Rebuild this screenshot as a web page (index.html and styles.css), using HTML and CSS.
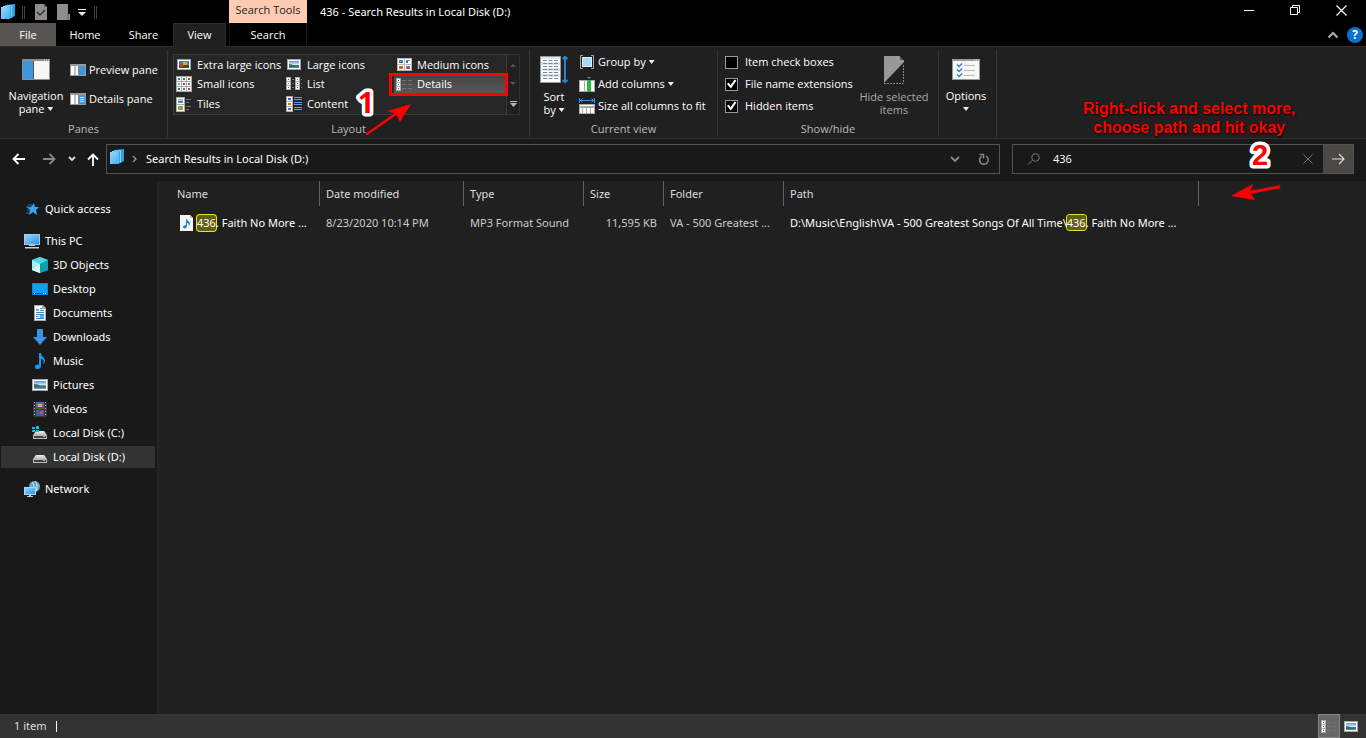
FILE: index.html
```html
<!DOCTYPE html>
<html lang="en">
<head>
<meta charset="utf-8">
<title>436 - Search Results in Local Disk (D:)</title>
<link rel="stylesheet" href="styles.css">
</head>
<body>
<svg class="sprite" aria-hidden="true">
  <defs>
    <linearGradient id="gFolder" x1="0" y1="0" x2="1" y2="1"><stop offset="0" stop-color="#9bdcff"/><stop offset="1" stop-color="#44aef5"/></linearGradient>
    <linearGradient id="gScreen" x1="0" y1="0" x2="1" y2="1"><stop offset="0" stop-color="#8fd3ff"/><stop offset="1" stop-color="#2a97ea"/></linearGradient>
    <linearGradient id="gSky" x1="0" y1="0" x2="0" y2="1"><stop offset="0" stop-color="#5b9bdc"/><stop offset=".5" stop-color="#d3e9f5"/><stop offset=".6" stop-color="#3f6f75"/><stop offset="1" stop-color="#78a9d0"/></linearGradient>
    <linearGradient id="gDisk" x1="0" y1="0" x2="0" y2="1"><stop offset="0" stop-color="#f2f2f2"/><stop offset="1" stop-color="#b5b5b5"/></linearGradient>
  </defs>
  <symbol id="results" viewBox="0 0 16 16"><path d="M5 1l10-1v12l-2 1V2L5 3z" fill="#2f9de8"/><path d="M3 2l10-1v12l-2 1H3z" fill="#7fd0ff"/><path d="M1 3l9-1v13H1z" fill="url(#gFolder)"/><path d="M10.500 2v12.500M12.500 1v12" stroke="#258bd6" stroke-width=".7"/></symbol>
  <symbol id="thumb" viewBox="0 0 14 11"><path d="M0 0h14v11H0z" fill="#a4a4a4"/><path d="M1 1h12v9H1z" fill="#fff"/><path d="M2 2h10v7H2z" fill="url(#gSky)"/><path d="M2 5l3 .5 2 1.500 5 .5v1H2z" fill="#3a6d74"/></symbol>
  <symbol id="thumbxl" viewBox="0 0 14 11"><path d="M0 0h14v11H0z" fill="#a4a4a4"/><path d="M1 1h12v9H1z" fill="#fff"/><path d="M2 2h10v7H2z" fill="#3878d8"/><path d="M2 6h10v3H2z" fill="#235c35"/><circle cx="8" cy="4.500" r="2.200" fill="#e8a81e"/><path d="M3 5h3v3H3z" fill="#d63b2b"/><path d="M7 6h3v2H7z" fill="#684014"/></symbol>
  <symbol id="medium" viewBox="0 0 15 13"><path d="M0 0h15v13H0z" fill="#b8b8b8"/><path d="M1 1h6v5H1zM8 1h6v5H8zM1 7h6v5H1zM8 7h6v5H8z" fill="#fff"/><path d="M2 2h4v2H2z" fill="#4d91cf"/><path d="M2 4h4v1H2z" fill="#3f705c"/><path d="M9 2h4v1H9z" fill="#52a6a0"/><path d="M9 3h2v2H9z" fill="#336a9b"/><path d="M2 8h4v3H2z" fill="#bd7b2c"/><path d="M3 8h2v2H3z" fill="#df523b"/><path d="M9 8h4v3H9z" fill="#7584c6"/><path d="M10 9h3v2h-3z" fill="#d33c3c"/></symbol>
  <symbol id="small" viewBox="0 0 16 16"><path d="M0 0h16v16H0z" fill="#aaa"/><path d="M1 1h4v4H1zM6 1h4v4H6zM11 1h4v4h-4zM1 6h4v4H1zM6 6h4v4H6zM11 6h4v4h-4zM1 11h4v4H1zM6 11h4v4H6zM11 11h4v4h-4z" fill="#fff"/><path d="M2 2h2v2H2zM12 7h2v2h-2zM7 12h2v2H7z" fill="#367bb7"/><path d="M7 2h2v2H7zM2 12h2v2H2z" fill="#2f7a64"/><path d="M12 2h2v2h-2zM7 7h2v2H7zM12 12h2v2h-2z" fill="#c23e30"/><path d="M2 7h2v2H2z" fill="#4aa6cc"/></symbol>
  <symbol id="list" viewBox="0 0 16 14"><path d="M0 0h5v13H0zM9 0h5v13H9z" fill="#aaa"/><path d="M1 1h3v3H1zM1 5h3v3H1zM1 9h3v3H1zM10 1h3v3h-3zM10 5h3v3h-3zM10 9h3v3h-3z" fill="#fff"/><path d="M2 2h1v1H2zM11 6h1v1h-1z" fill="#345"/><path d="M2 6h1v1H2zM11 2h1v1h-1z" fill="#267bd0"/><path d="M2 10h1v1H2zM11 10h1v1h-1z" fill="#d02222"/><path d="M6 2h2v1H6zM6 6h2v1H6zM6 10h2v1H6zM15 2h1v1h-1zM15 6h1v1h-1zM15 10h1v1h-1z" fill="#777"/></symbol>
  <symbol id="details" viewBox="0 0 16 13"><path d="M0 0h5v13H0z" fill="#aaa"/><path d="M1 1h3v3H1zM1 5h3v3H1zM1 9h3v3H1z" fill="#fff"/><path d="M2 2h1v1H2z" fill="#345"/><path d="M2 6h1v1H2z" fill="#267bd0"/><path d="M2 10h1v1H2z" fill="#d02222"/><path d="M6 2h4v1H6zM6 6h4v1H6zM6 10h4v1H6zM12 2h4v1h-4zM12 6h4v1h-4zM12 10h4v1h-4z" fill="#747474"/></symbol>
  <symbol id="tiles" viewBox="0 0 16 15"><path d="M0 0h9v15H0z" fill="#aaa"/><path d="M1 1h7v6H1zM1 8h7v6H1z" fill="#fff"/><path d="M2 2h5v4H2z" fill="url(#gSky)"/><path d="M2 9h5v4H2z" fill="#73a954"/><path d="M3 10h2v2H3zM6 11h1v2H6z" fill="#e28b2b"/><path d="M10 2h5v1h-5zM10 5h3v1h-3zM10 9h5v1h-5zM10 12h3v1h-3z" fill="#777"/></symbol>
  <symbol id="content" viewBox="0 0 16 16"><path d="M0 0h7v16H0z" fill="#aaa"/><path d="M1 1h5v4H1zM1 6h5v4H1zM1 11h5v4H1z" fill="#fff"/><path d="M2 2h3v2H2z" fill="#31729e"/><path d="M2 7h3v2H2z" fill="#bd8042"/><path d="M2 12h3v2H2z" fill="#327dc1"/><path d="M8 1h8v1H8zM8 6h8v1H8zM8 11h8v1H8z" fill="#6b9be8"/><path d="M8 3h8v1H8zM8 8h8v1H8zM8 13h8v1H8z" fill="#6b9be8"/></symbol>
  <symbol id="disk" viewBox="0 0 16 16"><path d="M4 6h8l3 4H1z" fill="url(#gDisk)"/><path d="M1 10h14v4H1z" fill="#b9b9b9"/><path d="M2 11h12v2H2z" fill="#444"/><path d="M11 11h2v1h-2z" fill="#35e248"/></symbol>
</svg>

<header class="titlebar">
  <div class="quick">
    <svg width="16" height="16"><use href="#results"/></svg>
    <span class="rail"></span>
    <button class="plain" aria-label="Properties"><svg width="12" height="16"><path d="M0 0h9l3 3v13H0z" fill="#8d8d8d"/><path d="M9 0v3h3" fill="#555"/><path d="M2 8l3 3 5-5" fill="none" stroke="#333" stroke-width="1.500"/></svg></button>
    <button class="plain" aria-label="New folder"><svg width="13" height="16"><path d="M0 0h11v10h2v6H0z" fill="#8d8d8d"/><path d="M11 10v6" stroke="#666"/></svg></button>
    <button class="plain last" aria-label="Customize toolbar"><svg width="8" height="7"><path d="M0 0h8v1H0zM0 3h8L4 7z" fill="#eee"/></svg></button>
    <span class="rail"></span>
  </div>
  <div class="tools">Search Tools</div>
  <h1 class="caption">436 - Search Results in Local Disk (D:)</h1>
  <div class="window">
    <button aria-label="Minimize"><svg width="10" height="11"><path d="M0 5h10v1H0z" fill="#fff"/></svg></button>
    <button aria-label="Restore"><svg width="11" height="11" fill="none" stroke="#fff"><path d="M.5 2.500h7v7h-7zM2.500 2.500v-2h7v7h-2"/></svg></button>
    <button aria-label="Close"><svg width="11" height="11"><path d="M.5.5l10 10M10.500.5l-10 10" stroke="#fff" stroke-width="1.200"/></svg></button>
  </div>
</header>

<nav class="tabs">
  <button class="tab file">File</button>
  <button class="tab home">Home</button>
  <button class="tab share">Share</button>
  <button class="tab view">View</button>
  <button class="tab search">Search</button>
  <div class="help">
    <button class="plain" aria-label="Collapse ribbon"><svg width="12" height="8"><path d="M1.500 6.500L6 2l4.500 4.500" fill="none" stroke="#aaa" stroke-width="2.200"/></svg></button>
    <button class="plain round" aria-label="Help">?</button>
  </div>
</nav>

<section class="ribbon">
  <div class="group panes">
    <div class="body">
      <button class="big nav">
        <svg width="28" height="21"><path d="M0 0h28v21H0z" fill="#8d8d8d"/><path d="M1 2h26v18H1z" fill="#f7f7f7"/><path d="M1 2h10v18H1z" fill="#3d96e0"/><path d="M11 2h1v18h-1z" fill="#555"/><path d="M22 1h1M24 1h1M26 1h1" stroke="#ddd"/></svg>
        <span>Navigation<br>pane <i class="caret"></i></span>
      </button>
      <div class="stack pair">
        <button class="item"><svg width="16" height="12"><path d="M0 0h16v12H0z" fill="#999"/><path d="M1 2h14v9H1z" fill="#fff"/><path d="M9 2h6v9H9z" fill="#3d96e0"/><path d="M5 2v9M8.500 2v9" stroke="#888"/></svg>Preview pane</button>
        <button class="item"><svg width="16" height="12"><path d="M0 0h16v12H0z" fill="#999"/><path d="M1 2h14v9H1z" fill="#fff"/><path d="M9 2h6v9H9z" fill="#3d96e0"/><path d="M5 2v9M8.500 2v9" stroke="#888"/><path d="M10 4.500h4M10 6.500h4M10 8.500h4" stroke="#c9e5fc"/></svg>Details pane</button>
      </div>
    </div>
    <div class="label">Panes</div>
  </div>

  <div class="group layout">
    <div class="body">
      <div class="gallery">
        <button class="choice"><svg width="14" height="11"><use href="#thumbxl"/></svg>Extra large icons</button>
        <button class="choice"><svg width="14" height="11"><use href="#thumb"/></svg>Large icons</button>
        <button class="choice"><svg width="15" height="13"><use href="#medium"/></svg>Medium icons</button>
        <button class="choice"><svg width="16" height="16"><use href="#small"/></svg>Small icons</button>
        <button class="choice"><svg width="16" height="14"><use href="#list"/></svg>List</button>
        <button class="choice chosen"><svg width="16" height="13"><use href="#details"/></svg>Details</button>
        <button class="choice"><svg width="16" height="15"><use href="#tiles"/></svg>Tiles</button>
        <button class="choice"><svg width="16" height="16"><use href="#content"/></svg>Content</button>
      </div>
      <div class="spin">
        <button class="plain" aria-label="Scroll up"><svg width="6" height="4"><path d="M0 4l3-3 3 3z" fill="#555"/></svg></button>
        <button class="plain" aria-label="Scroll down"><svg width="6" height="4"><path d="M0 0l3 3 3-3z" fill="#555"/></svg></button>
        <button class="plain" aria-label="More layouts"><svg width="7" height="6"><path d="M0 0h7v1H0zM0 2h7L3.500 6z" fill="#bbb"/></svg></button>
      </div>
    </div>
    <div class="label">Layout</div>
  </div>

  <div class="group current">
    <div class="body">
      <button class="big sort">
        <svg width="28" height="28"><path d="M0 0h21v27H0z" fill="#999"/><path d="M1 1h19v25H1z" fill="#fff"/><path d="M1 1h19v2H1zM1 6h19v3H1zM1 12h19v3H1zM1 18h19v3H1z" fill="#d2e8f6"/><path d="M3 4.500h15M3 7.500h15M3 10.500h15M3 13.500h15M3 16.500h15M3 19.500h15M3 22.500h15" stroke="#888" stroke-dasharray="4 1.500"/><path d="M25 2v23M22.500 3L25 .8 27.500 3M22.500 24l2.500 2.200 2.500-2.200" fill="none" stroke="#2d83cd" stroke-width="2"/></svg>
        <span>Sort<br>by <i class="caret"></i></span>
      </button>
      <div class="stack">
        <button class="item"><svg width="16" height="14"><path d="M4 .5H1.500v13H4M12 .5h2.500v13H12" fill="none" stroke="#aaa"/><path d="M3 2h10v10H3z" fill="#d9effc"/><path d="M4 3h8v8H4z" fill="#a8d7fa"/></svg>Group by <i class="caret"></i></button>
        <button class="item"><svg width="16" height="15"><path d="M0 3h16v12H0z" fill="#aaa"/><path d="M1 4h4v10H1zM6 4h4v10H6zM12 4h3v10h-3z" fill="#fff"/><path d="M8 3h4v12H8z" fill="#2eb642"/><path d="M8 0h4l-2 2z" fill="#3293df"/></svg>Add columns <i class="caret"></i></button>
        <button class="item"><svg width="16" height="16"><path d="M.5 0v5M15.500 0v5M1 2.500h14M3.500.5l-2 2 2 2M12.500.5l2 2-2 2" fill="none" stroke="#3293df"/><path d="M0 6h16v10H0z" fill="#aaa"/><path d="M1 10h2v5H1zM4 10h3v5H4zM8 10h3v5H8zM12 10h3v5h-3zM1 7h14v1H1z" fill="#fff"/></svg>Size all columns to fit</button>
      </div>
    </div>
    <div class="label">Current view</div>
  </div>

  <div class="group show">
    <div class="body">
      <div class="stack">
        <label class="item"><input type="checkbox">Item check boxes</label>
        <label class="item"><input type="checkbox" checked>File name extensions</label>
        <label class="item"><input type="checkbox" checked>Hidden items</label>
      </div>
      <button class="big hide" disabled>
        <svg width="22" height="28"><path d="M1 0h15l5 5v1L1 27z" fill="#989898"/><path d="M16 0v5h5z" fill="#555"/><path d="M16 0v5h5" fill="none" stroke="#bbb"/><path d="M20.500 9v18.500H1" fill="none" stroke="#888" stroke-dasharray="2 1"/></svg>
        <span>Hide selected<br>items</span>
      </button>
    </div>
    <div class="label">Show/hide</div>
  </div>

  <div class="group options">
    <div class="body">
      <button class="big">
        <svg width="28" height="21"><path d="M0 0h28v21H0z" fill="#999"/><path d="M1 2h26v18H1z" fill="#f7f7f7"/><path d="M12 6.500h11M12 11.500h11M12 16.500h11" stroke="#bbb"/><path d="M5 5.500l2 2 3-3M5 10.500l2 2 3-3M5 15.500l2 2 3-3" fill="none" stroke="#3283ca" stroke-width="1.500"/><path d="M22 1h1M24 1h1M26 1h1" stroke="#ddd"/></svg>
        <span>Options<br><i class="caret"></i></span>
      </button>
    </div>
  </div>
</section>

<section class="location">
  <div class="history">
    <button class="plain" aria-label="Back"><svg width="13" height="12"><path d="M13 6H1.500M6.500 1l-5 5 5 5" fill="none" stroke="#fff" stroke-width="1.800"/></svg></button>
    <button class="plain" aria-label="Forward"><svg width="13" height="12"><path d="M0 6h11.500M6.500 1l5 5-5 5" fill="none" stroke="#888" stroke-width="1.800"/></svg></button>
    <button class="plain" aria-label="Recent"><svg width="8" height="6"><path d="M1 1l3 3 3-3" fill="none" stroke="#ddd" stroke-width="1.800"/></svg></button>
    <button class="plain" aria-label="Up"><svg width="12" height="13"><path d="M6 13V1.500M1 6.500l5-5 5 5" fill="none" stroke="#fff" stroke-width="1.800"/></svg></button>
  </div>
  <div class="address">
    <svg width="16" height="16"><use href="#results"/></svg>
    <svg width="5" height="8"><path d="M1 1l3 3-3 3" fill="none" stroke="#999" stroke-width="1.300"/></svg>
    <span class="path">Search Results in Local Disk (D:)</span>
    <button class="plain drop" aria-label="Previous locations"><svg width="10" height="7"><path d="M1 1l4 4 4-4" fill="none" stroke="#8a8a8a" stroke-width="1.800"/></svg></button>
    <button class="plain refresh" aria-label="Refresh"><svg width="12" height="13"><path d="M8 3.200A4.300 4.300 0 1 1 3.500 3.400M1.500 1.500h4v4" fill="none" stroke="#888" stroke-width="1.500"/></svg></button>
  </div>
  <form class="find">
    <svg width="14" height="12"><circle cx="8.500" cy="4.500" r="3.800" fill="none" stroke="#777"/><path d="M5.500 7.200L1 11.500" stroke="#777"/></svg>
    <input type="text" value="436" aria-label="Search">
    <button type="button" class="plain" aria-label="Clear"><svg width="10" height="10"><path d="M.5.5l9 9M9.500.5l-9 9" stroke="#777"/></svg></button>
    <button type="button" class="go" aria-label="Go"><svg width="13" height="12"><path d="M0 6h12M7 1l5 5-5 5" fill="none" stroke="#ddd" stroke-width="1.200"/></svg></button>
  </form>
</section>

<main class="main">
  <nav class="tree">
    <a href="#" class="root"><svg width="16" height="16"><path d="M10 2l1 4h4l-3 3 1 5-4-3-4 3 1-5-3-3h4z" fill="#36a5f4"/><path d="M4 4h4M2 6h4M3 9h3M2 12h4" stroke="#2174b4"/></svg>Quick access</a>
    <a href="#" class="root gap"><svg width="16" height="16"><path d="M0 1h16v11H0z" fill="#a9c7d9"/><path d="M1 2h14v9H1z" fill="url(#gScreen)"/><path d="M5 12h6v1H5zM1 14h14v1.500H1z" fill="#c9d1d6"/></svg>This PC</a>
    <a href="#"><svg width="16" height="16"><path d="M8 0l8 3v10l-8 3-8-3V3z" fill="#25bccb"/><path d="M8 0l8 3-8 4-8-4z" fill="#51d5df"/><path d="M0 3l8 4v9l-8-3z" fill="#a5eef0"/><path d="M8 7l8-4v10l-8 3z" fill="#0e9fb7"/><path d="M0 13l8-6v9z" fill="#d3fbf7"/></svg>3D Objects</a>
    <a href="#"><svg width="16" height="16"><path d="M0 2h16v12H0z" fill="#1484d8"/><path d="M1 3h14v9H1z" fill="#159cf5"/><path d="M1 12h14v1H1z" fill="#0756a0"/><path d="M2 12h1v1H2zM11 12h1v1h-1zM13 12h1v1h-1z" fill="#fff"/></svg>Desktop</a>
    <a href="#"><svg width="16" height="16"><path d="M2 0h9l3 3v13H2z" fill="#aaa"/><path d="M3 1h7v3h3v11H3z" fill="#fff"/><path d="M4 7.500h8M8 3.500h2M8 5.500h4M4 9.500h8M4 13.500h8" stroke="#3386bf"/><path d="M4 4h3v2H4zM8 10h4v3H8z" fill="#6da9cf"/><path d="M4 11.500h3" stroke="#888"/></svg>Documents</a>
    <a href="#"><svg width="16" height="16"><path d="M5 0h6v8h4l-7 8-7-8h4z" fill="#3b94e5"/></svg>Downloads</a>
    <a href="#"><svg width="16" height="16"><path d="M7 0h2c0 4 4 4 4 8 0 1-1 3-2 3 2-4-1-5-2-5v7c0 4-6 4-6 1 0-2 2-3 4-2z" fill="#139cf2"/></svg>Music</a>
    <a href="#"><svg width="16" height="12"><path d="M0 0h16v12H0z" fill="#aaa"/><path d="M1 1h14v10H1z" fill="#fff"/><path d="M2 2h12v8H2z" fill="url(#gSky)"/><path d="M2 5l4 .5 2 1.500 6 .5v1H2z" fill="#3a6d74"/></svg>Pictures</a>
    <a href="#"><svg width="16" height="16"><path d="M1 1h14v15H1z" fill="#393939"/><path d="M4 1h8v7H4z" fill="#4868c4"/><path d="M4 9h8v6H4z" fill="#315fb5"/><path d="M6 3h4v3H6z" fill="#e5ae35"/><path d="M4 6h8v2H4z" fill="#74502c"/><path d="M8 10h3v3H8z" fill="#d64f3c"/><path d="M2.500 1v15M13.500 1v15" stroke="#aaa" stroke-dasharray="1 2"/></svg>Videos</a>
    <a href="#"><svg width="16" height="16"><use href="#disk"/><path d="M0 2h3v2H0zM4 1h3v3H4zM0 5h3v2H0zM4 5h3v2H4z" fill="#16b8f3"/></svg>Local Disk (C:)</a>
    <a href="#" class="current-disk"><svg width="16" height="16"><use href="#disk"/></svg>Local Disk (D:)</a>
    <a href="#" class="root gap"><svg width="16" height="16"><circle cx="10.500" cy="5.500" r="5.500" fill="#6ca7c5"/><path d="M8 1q4 4 0 9M11 0q4 5 1 10" fill="none" stroke="#c8e5ef"/><path d="M0 6h12v8H0z" fill="#a7d8f5"/><path d="M1 7h10v6H1z" fill="url(#gScreen)"/><path d="M5 14h2v1h2v1H3v-1h2z" fill="#ccc"/></svg>Network</a>
  </nav>
  <div class="files">
    <table>
      <colgroup><col class="c-name"><col class="c-date"><col class="c-type"><col class="c-size"><col class="c-folder"><col class="c-path"><col></colgroup>
      <thead><tr><th>Name</th><th>Date modified</th><th>Type</th><th>Size</th><th>Folder</th><th>Path</th><td></td></tr></thead>
      <tbody><tr>
        <td class="name"><svg width="13" height="16"><path d="M0 0h10l3 3v13H0z" fill="#f4f4f4"/><path d="M10 0v3h3" fill="#bbb"/><path d="M6 4h1c0 2 3 2 3 5l-1 2c0-2-1-3-2-3v3c0 3-4 3-4 1 0-1 1-2 3-2z" fill="#158bd8"/></svg><mark>436</mark>. Faith No More ...</td>
        <td>8/23/2020 10:14 PM</td><td>MP3 Format Sound</td><td class="size">11,595 KB</td><td>VA - 500 Greatest ...</td>
        <td class="full">D:\Music\English\VA - 500 Greatest Songs Of All Time\<mark>436</mark>. Faith No More ...</td><td></td>
      </tr></tbody>
    </table>
  </div>
</main>

<footer class="status">
  <span>1 item</span><span class="bar"></span>
  <div class="modes">
    <button class="mode on" aria-label="Details view"><svg width="16" height="13"><use href="#details"/></svg></button>
    <button class="mode" aria-label="Large icons view"><svg width="14" height="11"><use href="#thumb"/></svg></button>
  </div>
</footer>

<div class="note frame"></div>
<svg class="note step-one" width="30" height="46"><text x="15" y="33" class="digit plain-one">1</text></svg>
<svg class="note arrow-one" width="50" height="34"><path d="M2 31L32 10" stroke="#f00" stroke-width="2.500" stroke-linecap="round"/><path d="M46 1L35 19l-4-8-9-3z" fill="#f00"/></svg>
<p class="note message">Right-click and select more,<br>choose path and hit okay</p>
<svg class="note step-two" width="30" height="46"><text x="15" y="33" class="digit">2</text></svg>
<svg class="note arrow-two" width="50" height="18"><path d="M48 3L18 8.500" stroke="#f00" stroke-width="2.800" stroke-linecap="round"/><path d="M0 12L22 0l-3 8 5 8z" fill="#f00"/></svg>
</body>
</html>
```
FILE: styles.css
```css
* { box-sizing: border-box; }
body {
  margin: 0;
  min-height: 100vh;
  display: flex;
  flex-direction: column;
  position: relative;
  background: #191919;
  color: #fff;
  font: 11px/16px "Open Sans", "Noto Sans", sans-serif;
}
svg { display: block; flex: none; }
.sprite { position: absolute; width: 0; height: 0; }
button, input { font: inherit; color: inherit; }
button { border: 0; padding: 0; margin: 0; background: none; }
.plain { display: flex; align-items: center; justify-content: center; }
.caption, .path, .tree, .files, .status { font-family: "Noto Sans", "Open Sans", sans-serif; }

.titlebar { display: flex; height: 23px; background: #000; }
.quick { width: 229px; display: flex; align-items: center; gap: 10px; padding: 1px 0 0; }
.quick > svg { margin-right: -4px; }
.quick .last { margin: 0 -2px; }
.rail { width: 3px; height: 13px; border: 1px solid #444; border-width: 0 1px; }
.tools { width: 78px; text-align: center; line-height: 20px; background: #fccbb2; color: #222; }
.caption { margin: 0; padding-left: 13px; flex: 1; font-weight: 400; font-size: 11px; line-height: 23px; }
.window { display: flex; padding-right: 2px; }
.window button { width: 46px; height: 21px; display: flex; align-items: center; justify-content: center; }

.tabs { display: flex; height: 23px; background: #000; }
.tab { line-height: 23px; }
.file { width: 56px; background: #575551; }
.home { width: 58px; }
.share { width: 59px; }
.view { width: 53px; height: 24px; background: #202020; border: 1px solid #2d2d2d; border-bottom: 0; line-height: 20px; position: relative; padding-bottom: 2px; }
.search { width: 78px; margin: 0 0 0 3px; border: 1px solid #181818; border-width: 0 1px; }
.help { margin-left: auto; display: flex; align-items: center; gap: 8px; padding-right: 3px; }
.round { width: 16px; height: 16px; border-radius: 50%; background: #0b70d0; font-weight: 700; font-size: 12px; }

.ribbon { display: flex; height: 93px; padding-top: 3px; background: #202020; border-top: 1px solid #2d2d2d; border-bottom: 1px solid #303030; }
.group { display: flex; flex-direction: column; height: 87px; border-right: 1px solid #363636; }
.body { display: flex; height: 72px; }
.label { text-align: center; line-height: 16px; color: #bbb; }
.panes { width: 168px; }
.layout { width: 362px; }
.current { width: 188px; }
.show { width: 221px; }
.options { width: 58px; }
.big { display: flex; flex-direction: column; align-items: center; line-height: 13px; padding-top: 9px; gap: 9px; }
.big span { white-space: nowrap; }
.nav { width: 72px; }
.sort { width: 48px; padding-top: 6px; gap: 6px; }
.hide { width: 74px; padding-top: 6px; gap: 6px; color: #aaa; }
.options .big { width: 54px; }
.caret { display: inline-block; width: 6px; height: 4px; background: #eee; clip-path: polygon(0 0, 100% 0, 50% 100%); vertical-align: 2px; }
.stack { display: flex; flex-direction: column; padding-top: 1px; }
.item { display: flex; align-items: center; gap: 3px; height: 22px; white-space: nowrap; }
.pair { padding: 9px 0 0; gap: 7px; margin-left: -2px; }
.current .stack { margin-left: 1px; }
.show .stack { padding-left: 7px; width: 139px; }
.show .item { gap: 7px; }
input[type="checkbox"] { appearance: none; width: 13px; height: 13px; margin: 0; border: 1px solid #999; background: #000; }
input[type="checkbox"]:checked::before { content: ""; display: block; width: 11px; height: 11px; background: #fff; clip-path: polygon(8% 48%, 26% 38%, 42% 62%, 78% 8%, 94% 18%, 45% 92%); }

.layout .body { padding: 4px 0 0 5px; }
.gallery { display: grid; grid-template-columns: 110px 110px 112px; grid-template-rows: 19px 20px 20px; height: 61px; border: 1px solid #3b3b3b; background: #262626; }
.choice { display: grid; grid-template-columns: 16px auto; justify-content: start; align-items: center; justify-items: center; gap: 5px; padding-left: 2px; white-space: nowrap; }
.chosen { background: linear-gradient(#424242, #595959); }
.spin { width: 13px; height: 61px; display: grid; grid-template-rows: 19px 20px 20px; justify-content: center; border: 1px solid #303030; border-left: 0; }

.location { display: flex; height: 42px; padding: 5px 12px 7px 0; background: #191919; }
.history { width: 106px; display: flex; align-items: center; padding-left: 12px; gap: 18px; }
.history button:nth-child(3) { margin: 0 -7px 0 -6px; }
.address { flex: 1; display: flex; align-items: center; border: 1px solid #535353; padding-left: 2px; }
.address > svg:nth-child(2) { margin: 0 9px 0 7px; }
.address > svg:first-child { margin-bottom: 4px; }
.path { flex: 1; }
.drop { width: 29px; height: 100%; }
.refresh { width: 30px; height: 100%; }
.find { width: 342px; margin-left: 12px; display: flex; align-items: center; border: 1px solid #535353; padding-left: 14px; }
.find input { flex: 1; min-width: 0; border: 0; outline: 0; background: none; padding: 0 12px; }
.find .plain { width: 30px; height: 28px; }
.go { width: 30px; height: 28px; display: flex; align-items: center; justify-content: center; background: #4b4946; }

.main { flex: 1; display: flex; }
.tree { width: 159px; padding-top: 17px; border-right: 2px solid #252525; }
.tree a { display: flex; align-items: center; height: 22px; gap: 5px; padding-left: 31px; margin: 0 2px 2px 1px; color: #fff; text-decoration: none; }
.tree .root { padding-left: 23px; }
.tree .gap { margin-top: 10px; }
.tree .current-disk { background: #333; }
.files { flex: 1; background: #202020; }
table { width: 100%; table-layout: fixed; border-collapse: separate; border-spacing: 0; }
.c-name { width: 161px; }
.c-date { width: 144px; }
.c-type, .c-folder { width: 120px; }
.c-size { width: 80px; }
.c-path { width: 415px; }
th { height: 25px; padding: 0 6px; text-align: left; font-weight: 400; color: #ddd; border-right: 1px solid #636363; }
th:first-child { padding-left: 18px; }
tbody td { height: 34px; padding: 0 6px; color: #ccc; white-space: nowrap; }
tbody .name { display: flex; align-items: center; padding: 0 0 0 21px; color: #fff; }
tbody .size { padding-right: 7px; text-align: right; }
tbody .full { color: #fff; }
.name svg { margin-right: 4px; }
mark { color: #fff; background: #615f14; border-radius: 3px; box-shadow: 0 0 0 1px #e8e51c; }

.status { display: flex; align-items: center; height: 24px; padding: 0 4px 0 14px; background: #333; color: #ddd; }
.bar { width: 1px; height: 11px; margin-left: 10px; background: #fff; }
.modes { margin-left: auto; display: flex; }
.mode { width: 22px; height: 24px; display: flex; align-items: center; justify-content: center; }
.on { background: #666; border: 1px solid #888; }

.note { position: absolute; margin: 0; pointer-events: none; }
.frame { left: 389px; top: 73px; width: 119px; height: 23px; border: 3px solid #f00; }
.digit { font: bold 29px "Liberation Sans", Arial, sans-serif; text-anchor: middle; fill: #f00; stroke: #fff; stroke-width: 7px; stroke-linejoin: round; paint-order: stroke; }
.plain-one { font-family: "Open Sans", sans-serif; }
.step-one { left: 351px; top: 80px; }
.step-two { left: 1245px; top: 132px; }
.arrow-one { left: 365px; top: 103px; }
.arrow-two { left: 1231px; top: 184px; }
.message { left: 1083px; top: 99px; font: bold 16px/19px "Liberation Sans", Arial, sans-serif; color: #f00; text-align: center; white-space: nowrap; text-shadow: 1px 1px 2px #000; }
```
